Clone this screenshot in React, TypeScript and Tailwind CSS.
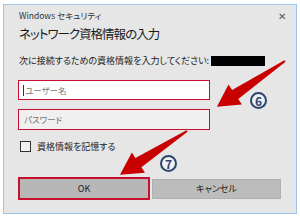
const font = "font-['Noto_Sans_CJK_JP','Noto_Sans',sans-serif] [font-feature-settings:'palt']";

function Arrow({ x, y, len, angle }: { x: number; y: number; len: number; angle: number }) {
  const h = len - 22;
  return (
    <polygon
      points={`0,-1 ${h},-5.5 ${h},-12 ${len},0 ${h},12 ${h},5.5 0,1`}
      transform={`translate(${x} ${y}) rotate(${angle})`}
      fill="#c80000"
    />
  );
}

function Badge({ n, className }: { n: string; className: string }) {
  return (
    <div
      className={`absolute flex h-[17px] w-[17px] items-center justify-center rounded-full border-2 border-[#2c4470] bg-white/40 text-[12px] font-bold leading-none text-[#2c4470] ${className}`}
    >
      {n}
    </div>
  );
}

export default function App() {
  return (
    <div className={`relative h-[217px] w-[300px] overflow-hidden bg-white pl-[3px] pt-[4px] ${font}`}>
      {/* dialog window */}
      <div className="flex h-[210px] w-[294px] flex-col border border-[#9cc5ea] bg-[#e6e6e6] px-[14px]">
        <div className="flex h-[20px] items-center justify-between pl-[1px]">
          <span className="text-[8.5px] text-[#333]">Windows セキュリティ</span>
          <span className="mr-[-4px] text-[10px] text-[#555]">✕</span>
        </div>
        <div className="flex h-[18px] items-center pl-[1px] text-[12.5px] tracking-[-1px] text-[#1a1a1a]">
          ネットワーク資格情報の入力
        </div>
        <div className="mt-[11px] flex h-[14px] items-center pl-[1px] text-[9px] text-[#222]">
          <span>次に接続するための資格情報を入力してください:</span>
          <span className="ml-[2px] h-[10px] w-[54px] bg-black" />
        </div>

        {/* inputs */}
        <div className="mt-[12px] flex h-[20px] w-[192px] items-center border-[1.5px] border-[#c8102e] bg-white pl-[4px] text-[8.5px] text-[#777]">
          <span className="mr-[1px] h-[11px] w-px bg-[#333]" />
          ユーザー名
        </div>
        <div className="mt-[9px] flex h-[21px] w-[192px] items-center border-[1.5px] border-[#c8102e] bg-[#f0f0f0] pl-[5px] text-[8.5px] text-[#777]">
          パスワード
        </div>

        <div className="mt-[11px] flex h-[11px] items-center gap-[6px] pl-[2px]">
          <span className="h-[11px] w-[11px] border border-[#333] bg-[#f2f2f2]" />
          <span className="text-[9px] text-[#222]">資格情報を記憶する</span>
        </div>

        {/* buttons */}
        <div className="mt-[25px] flex items-center">
          <div className="flex h-[23px] w-[132px] items-center justify-center border-2 border-[#c8102e] bg-[#b7b7b7] text-[9px] text-[#222]">
            OK
          </div>
          <div className="ml-[2px] flex h-[20px] w-[129px] items-center justify-center border border-[#b0b0b0] bg-[#bcbcbc] text-[9px] text-[#222]">
            キャンセル
          </div>
        </div>
      </div>

      {/* annotations */}
      <svg className="pointer-events-none absolute left-0 top-0" width="300" height="217">
        <Arrow x={285} y={61} len={82} angle={146.1} />
        <Arrow x={187} y={131} len={80} angle={146.9} />
      </svg>
      <Badge n="6" className="left-[250px] top-[92px]" />
      <Badge n="7" className="left-[160px] top-[155px]" />
    </div>
  );
}
